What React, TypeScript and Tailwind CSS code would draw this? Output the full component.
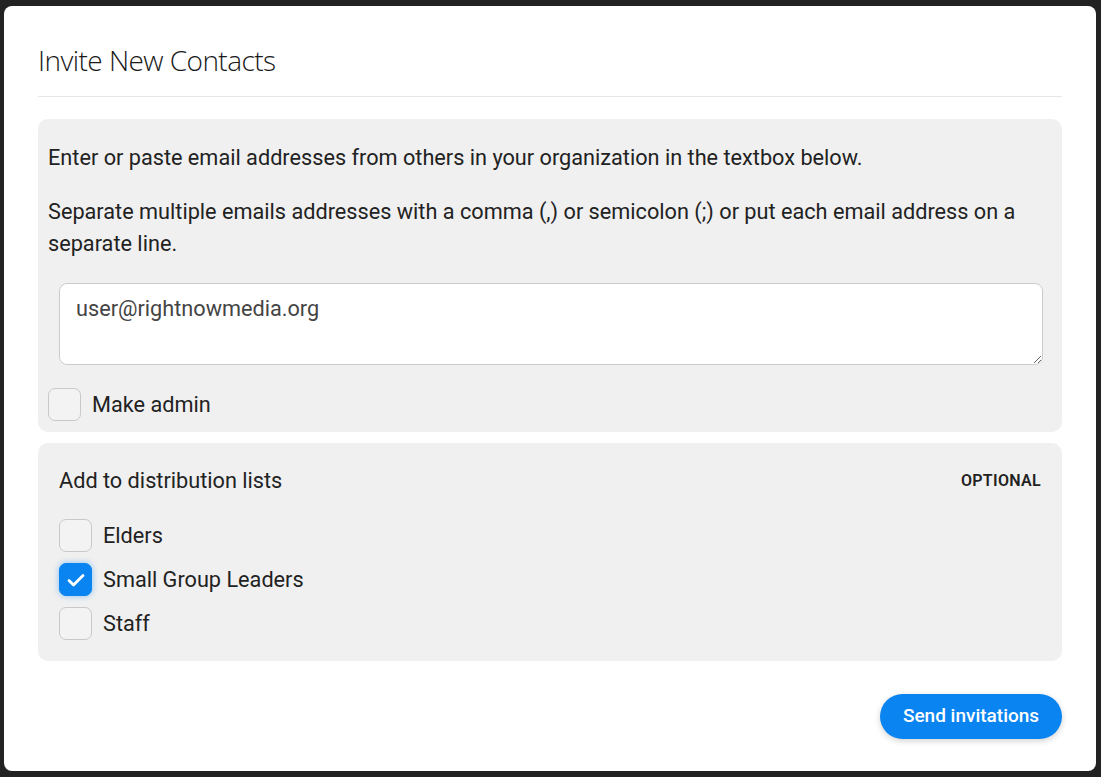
import { useState } from "react";

const LISTS = ["Elders", "Small Group Leaders", "Staff"];

function Box({ checked, onClick }: { checked: boolean; onClick: () => void }) {
  return (
    <button
      type="button"
      onClick={onClick}
      className={`w-[33px] h-[33px] shrink-0 rounded-[7px] border flex items-center justify-center ${
        checked
          ? "bg-[#0a84f0] border-[#0a84f0] shadow-[0_0_6px_rgba(10,132,240,0.45)]"
          : "bg-[#f3f3f3] border-[#c9c9c9]"
      }`}
    >
      {checked && (
        <svg viewBox="0 0 24 24" className="w-[24px] h-[24px]" fill="none" stroke="white" strokeWidth={2.8} strokeLinecap="round" strokeLinejoin="round">
          <path d="M5 12.5l4.5 4.5L19 7.5" />
        </svg>
      )}
    </button>
  );
}

export default function App() {
  const [emails, setEmails] = useState("user@rightnowmedia.org");
  const [admin, setAdmin] = useState(false);
  const [picked, setPicked] = useState<string[]>(["Small Group Leaders"]);

  const toggle = (name: string) =>
    setPicked((p) => (p.includes(name) ? p.filter((x) => x !== name) : [...p, name]));

  return (
    <div className="h-[777px] bg-[#222222] pt-[6px] pl-[4px] pr-[5px] pb-[6px] font-['Roboto',sans-serif] text-[#222]">
      <div className="h-full bg-white rounded-[8px] px-[34px] flex flex-col">
        {/* Header */}
        <div className="pt-[36px] pb-[18px] border-b border-[#e6e6e6]">
          <h1 className="text-[28px] leading-[36px] font-light tracking-[-0.02em] text-[#1a1a1a] font-['Open_Sans',sans-serif]">
            Invite New Contacts
          </h1>
        </div>

        {/* Emails panel */}
        <div className="mt-[22px] bg-[#f0f0f0] rounded-[10px] pl-[10px] pr-[10px] pt-[23px] pb-[11px]">
          <p className="text-[21.7px] leading-[32px]">
            Enter or paste email addresses from others in your organization in the textbox below.
          </p>
          <p className="mt-[22px] text-[21.7px] leading-[32px]">
            Separate multiple emails addresses with a comma (,) or semicolon (;) or put each email address on a separate line.
          </p>
          <textarea
            value={emails}
            onChange={(e) => setEmails(e.target.value)}
            className="block mt-[23px] ml-[11px] w-[984px] h-[82px] bg-white border border-[#cccccc] rounded-[8px] pl-[16px] pr-3 pt-[11px] text-[21.7px] leading-[28px] text-[#444] outline-none resize-y"
          />
          <div className="mt-[23px] flex items-center gap-[11px]">
            <Box checked={admin} onClick={() => setAdmin(!admin)} />
            <span className="text-[21.7px] leading-[28px]">Make admin</span>
          </div>
        </div>

        {/* Distribution lists */}
        <div className="mt-[11px] bg-[#f0f0f0] rounded-[10px] px-[21px] pt-[24px] pb-[21px]">
          <div className="flex items-center justify-between">
            <span className="text-[21.7px] leading-[28px]">Add to distribution lists</span>
            <span className="text-[16px] leading-[20px] font-semibold tracking-[0.02em] text-[#222]">OPTIONAL</span>
          </div>
          <div className="mt-[24px] flex flex-col gap-[11px]">
            {LISTS.map((name) => (
              <div key={name} className="flex items-center gap-[11px]">
                <Box checked={picked.includes(name)} onClick={() => toggle(name)} />
                <span className="text-[21.7px] leading-[28px]">{name}</span>
              </div>
            ))}
          </div>
        </div>

        {/* Footer */}
        <div className="mt-[33px] flex justify-end">
          <button className="h-[45px] w-[182px] rounded-full bg-[#0a84f0] text-white text-[19px] font-medium shadow-[0_2px_6px_rgba(0,0,0,0.18)]">
            Send invitations
          </button>
        </div>
      </div>
    </div>
  );
}
